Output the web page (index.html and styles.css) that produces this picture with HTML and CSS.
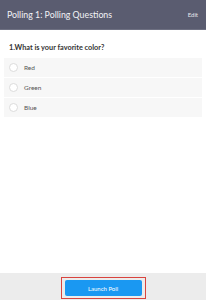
FILE: index.html
```html
<!DOCTYPE html>
<html>
<head>
<meta charset="utf-8">
<link rel="stylesheet" href="styles.css">
</head>
<body>
<div class="app">
  <header class="header">
    <span class="title">Polling 1: Polling Questions</span>
    <span class="edit">Edit</span>
  </header>
  <main class="content">
    <div class="question">1.What is your favorite color?</div>
    <ul class="options">
      <li class="option"><span class="radio"></span><span class="label">Red</span></li>
      <li class="option"><span class="radio"></span><span class="label">Green</span></li>
      <li class="option"><span class="radio"></span><span class="label">Blue</span></li>
    </ul>
  </main>
  <footer class="footer">
    <div class="highlight">
      <button class="launch">Launch Poll</button>
    </div>
  </footer>
</div>
</body>
</html>
```
FILE: styles.css
```css
html, body {
  margin: 0;
  padding: 0;
}
body {
  width: 206px;
  height: 300px;
  font-family: "Lato", "Open Sans", sans-serif;
  background: #ffffff;
}
.app {
  display: flex;
  flex-direction: column;
  height: 300px;
}
.header {
  height: 30px;
  background: #5a5c70;
  border-bottom: 1px solid #6e7082;
  display: flex;
  align-items: center;
  justify-content: space-between;
  padding: 0 8px 0 7px;
  box-sizing: border-box;
}
.title {
  color: #f2f2f6;
  font-size: 8.8px;
}
.edit {
  color: #e6e6ec;
  font-size: 6px;
}
.content {
  flex: 1;
  padding: 13px 4px 0 4px;
}
.question {
  font-size: 7.3px;
  font-weight: bold;
  color: #333333;
  padding-left: 5px;
  height: 15px;
}
.options {
  list-style: none;
  margin: 0;
  padding: 0;
  background: #f7f7f7;
}
.option {
  height: 19px;
  display: flex;
  align-items: center;
  padding-left: 5px;
  border-bottom: 1px solid #ffffff;
}
.option:last-child {
  border-bottom: none;
}
.radio {
  width: 7px;
  height: 7px;
  border: 1px solid #dcdcdc;
  border-radius: 50%;
  background: #ffffff;
  margin-right: 6px;
}
.label {
  font-size: 6.5px;
  color: #555555;
}
.footer {
  height: 27px;
  background: #ececec;
  display: flex;
  justify-content: center;
  align-items: flex-end;
}
.highlight {
  border: 1px solid #d9443e;
  padding: 2px 3px 2px 3px;
  margin-bottom: 1px;
}
.launch {
  display: block;
  width: 77px;
  height: 16px;
  background: #1a98f2;
  border: none;
  border-radius: 2px;
  color: #ffffff;
  font-family: "Lato", "Open Sans", sans-serif;
  font-size: 6px;
  padding: 0;
}
```
